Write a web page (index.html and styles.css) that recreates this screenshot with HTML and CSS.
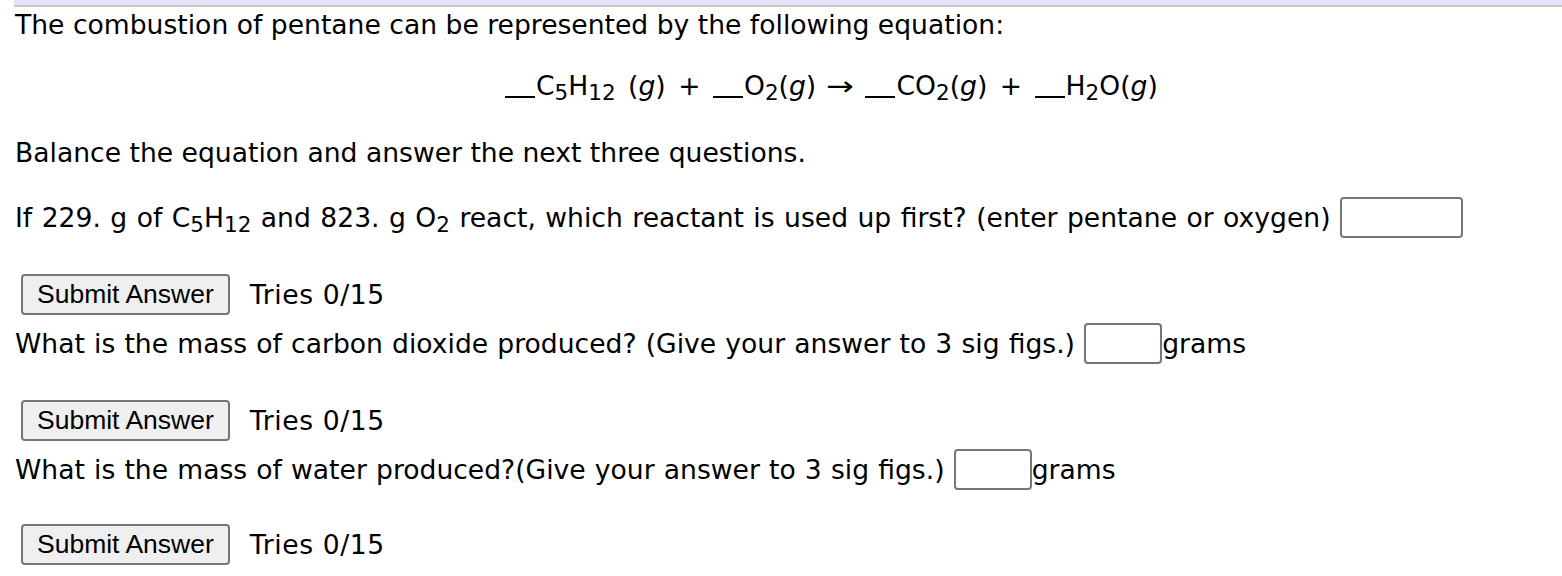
FILE: index.html
```html
<!DOCTYPE html>
<html>
<head>
<meta charset="utf-8">
<link rel="stylesheet" href="styles.css">
</head>
<body>
<div class="page">
  <div class="band"></div>
  <p class="line first">The combustion of pentane can be represented by the following equation:</p>
  <div class="eq">
    <span class="blank"></span>C<sub>5</sub>H<sub>12</sub> (<i>g</i>) + <span class="blank"></span>O<sub>2</sub>(<i>g</i>) <span class="arrow">→</span> <span class="blank"></span>CO<sub>2</sub>(<i>g</i>) + <span class="blank"></span>H<sub>2</sub>O(<i>g</i>)
  </div>
  <p class="line balance">Balance the equation and answer the next three questions.</p>
  <p class="line q q1">If 229. g of C<sub>5</sub>H<sub>12</sub> and 823. g O<sub>2</sub> react, which reactant is used up first? (enter pentane or oxygen) <span class="box wide"></span></p>
  <div class="submit s1"><span class="btn">Submit Answer</span><span class="tries">Tries 0/15</span></div>
  <p class="line q q2">What is the mass of carbon dioxide produced? (Give your answer to 3 sig figs.) <span class="box"></span>grams</p>
  <div class="submit s2"><span class="btn">Submit Answer</span><span class="tries">Tries 0/15</span></div>
  <p class="line q q3">What is the mass of water produced?(Give your answer to 3 sig figs.) <span class="box"></span>grams</p>
  <div class="submit s3"><span class="btn">Submit Answer</span><span class="tries">Tries 0/15</span></div>
</div>
</body>
</html>
```
FILE: styles.css
```css
html, body {
  margin: 0;
  padding: 0;
  background: #ffffff;
}
.page {
  font-family: "DejaVu Sans", Verdana, sans-serif;
  font-size: 26.6px;
  color: #000000;
  padding-left: 14px;
}
.band {
  height: 5px;
  background: #e4e4fb;
  border-bottom: 2px solid #c8c8c8;
}
.line {
  margin: 0;
  padding-left: 1px;
  line-height: 36px;
  height: 36px;
  white-space: nowrap;
}
sub {
  font-size: 21.5px;
  vertical-align: -5px;
  line-height: 0;
}
.eq {
  margin-top: 25px;
  padding-left: 491px;
  line-height: 36px;
  height: 36px;
  white-space: nowrap;
  word-spacing: 4px;
}
.arrow {
  display: inline-block;
  padding: 0 2px 0 0;
  transform: scaleX(1.25);
}
.blank {
  display: inline-block;
  width: 30px;
  height: 2px;
  background: #000;
  vertical-align: -3px;
  margin-right: 1px;
}
.balance {
  margin-top: 31px;
}
.q {
  line-height: 41px;
  height: 41px;
  word-spacing: 0.7px;
}
.q1 {
  margin-top: 26px;
  word-spacing: 1px;
}
.box {
  display: inline-block;
  width: 74px;
  height: 37px;
  border: 2px solid #767676;
  border-radius: 4px;
  box-sizing: content-box;
  vertical-align: middle;
  margin-top: -4px;
}
.box.wide {
  width: 119px;
}
.submit {
  display: flex;
  align-items: center;
  gap: 20px;
  padding-left: 7px;
}
.s1 { margin-top: 36px; }
.s2 { margin-top: 36px; }
.s3 { margin-top: 34px; }
.btn {
  font-family: "Liberation Sans", Arial, sans-serif;
  font-size: 26.5px;
  background: #efefef;
  border: 2px solid #767676;
  border-radius: 4px;
  padding: 3px 14px;
  line-height: 31px;
}
.tries {
  line-height: 36px;
  letter-spacing: 0.6px;
}
.q2, .q3 {
  margin-top: 8px;
}
```
